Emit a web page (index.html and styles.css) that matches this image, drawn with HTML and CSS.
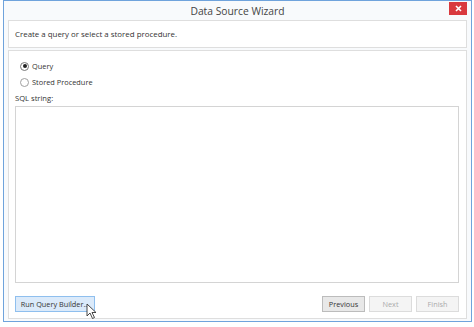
FILE: index.html
```html
<html>

<head>
    <link rel="stylesheet" href="styles.css">
</head>

<body>

    <div class="window">
        <div class="titlebar">
            <span></span>
            <span class="title">Data Source Wizard</span>
            <span class="close">
                <svg width="7" height="7" viewBox="0 0 7 7">
                    <path d="M1 1 L6 6 M6 1 L1 6" stroke="#fff" stroke-width="1.6" />
                </svg>
            </span>
        </div>

        <div class="content">
            <div class="header">
                <p> Create a query or select a stored procedure. </p>
            </div>

            <div class="page">
                <div class="options">
                    <label class="radio"> <span class="dot checked"></span> Query </label>
                    <label class="radio"> <span class="dot"></span> Stored Procedure </label>
                </div>

                <p class="caption"> SQL string: </p>
                <div class="sqlbox"></div>

                <div class="buttons">
                    <div class="btn builder">
                        Run Query Builder...
                        <svg class="cursor" width="12" height="17" viewBox="0 0 12 17">
                            <path d="M1 1 L1 13 L4 10 L6.5 15.5 L8.5 14.5 L6 9.5 L10 9.5 Z" fill="#fff" stroke="#333" stroke-width="0.9" stroke-linejoin="round" />
                        </svg>
                    </div>
                    <div class="nav">
                        <div class="btn"> Previous </div>
                        <div class="btn disabled"> Next </div>
                        <div class="btn disabled"> Finish </div>
                    </div>
                </div>
            </div>
        </div>
    </div>

</body>

</html>
```

FILE: styles.css
```css
body {
    margin: 0;
    background-color: #ffffff;
    font-family: "Open Sans", "Noto Sans", sans-serif;
    color: #333;
}

/* Window frame */
.window {
    margin-left: 3px;
    width: 467px;
    height: 320px;
    border: 1px solid #6fa3dc;
    background-color: #f8fafc;
    display: flex;
    flex-direction: column;
}

.titlebar {
    height: 19px;
    display: grid;
    grid-template-columns: 1fr auto 1fr;
    align-items: start;
}

.title {
    font-size: 10.3px;
    line-height: 21px;
    color: #444;
}

.close {
    justify-self: end;
    margin-right: 4px;
    margin-top: 1px;
    width: 18px;
    height: 13px;
    background-color: #d9393e;
    display: flex;
    align-items: center;
    justify-content: center;
}

.content {
    flex: 1;
    padding: 0 4px 3px 4px;
    display: flex;
    flex-direction: column;
    gap: 2px;
}

.header {
    height: 26px;
    background-color: #fff;
    border: 1px solid #dedede;
    display: flex;
    align-items: center;
}

.header p {
    margin: 0 0 0 6px;
    font-size: 7.9px;
}

/* Wizard page */
.page {
    flex: 1;
    background-color: #fff;
    border: 1px solid #dedede;
    padding: 9px 7px 6px 6px;
    display: flex;
    flex-direction: column;
}

.options {
    display: flex;
    flex-direction: column;
    gap: 4px;
    padding-left: 5px;
}

.radio {
    display: flex;
    align-items: center;
    gap: 3px;
    font-size: 7.4px;
    height: 12px;
}

.dot {
    width: 9px;
    height: 9px;
    border: 1px solid #a0a0a0;
    border-radius: 50%;
    box-sizing: border-box;
    display: flex;
    align-items: center;
    justify-content: center;
}

.dot.checked {
    border-color: #777;
}

.dot.checked::after {
    content: "";
    width: 4px;
    height: 4px;
    border-radius: 50%;
    background-color: #222;
}

.caption {
    margin: 5px 0 3px 0;
    font-size: 7.6px;
}

.sqlbox {
    height: 175px;
    border: 1px solid #d4d4d4;
    background-color: #fff;
}

.buttons {
    margin-top: 13px;
    display: flex;
    justify-content: space-between;
}

.btn {
    height: 14px;
    border: 1px solid #bcbcbc;
    background-color: #e8e8e8;
    font-size: 7.3px;
    line-height: 14px;
    text-align: center;
    width: 41px;
}

.btn.builder {
    position: relative;
    width: 78px;
    background-color: #dbeafa;
    border-color: #8fbfee;
}

.cursor {
    position: absolute;
    left: 70px;
    top: 6px;
}

.nav {
    display: flex;
    gap: 4px;
}

.btn.disabled {
    background-color: #f4f4f4;
    border-color: #dcdcdc;
    color: #aaa;
}
```
